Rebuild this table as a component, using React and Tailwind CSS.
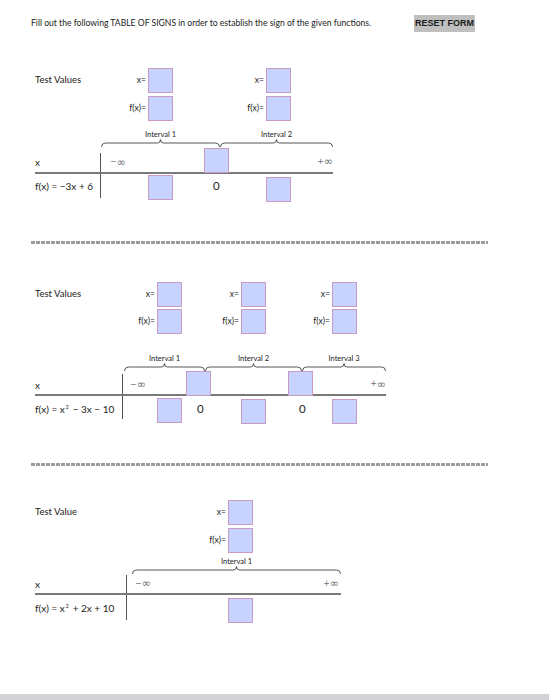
import React from 'react';

const Box = ({ className = '' }) => (
  <div className={`w-[25px] h-[25px] shrink-0 bg-[#c8d2fe] border border-[#c79bc4] ${className}`} />
);

const Label = ({ w, children }) => (
  <div className={`${w} shrink-0 text-right pr-[2px] text-[8.5px] whitespace-nowrap`}>{children}</div>
);

// curly braces over the intervals, one segment per interval
const Brace = ({ segments }) => {
  const total = segments.reduce((a, b) => a + b, 0);
  let x = 0;
  const paths = segments.map((w) => {
    const x0 = x + 0.5;
    const x1 = x + w - 0.5;
    const m = x + w / 2;
    x += w;
    return `M${x0} 8 Q${x0} 4 ${x0 + 4} 4 L${m - 3} 4 Q${m} 4 ${m} 0.5 Q${m} 4 ${m + 3} 4 L${x1 - 4} 4 Q${x1} 4 ${x1} 8`;
  });
  return (
    <svg width={total} height="8" className="block">
      {paths.map((d, i) => (
        <path key={i} d={d} fill="none" stroke="#444" strokeWidth="0.9" />
      ))}
    </svg>
  );
};

const Divider = ({ className = '' }) => (
  <div
    className={`ml-[31px] w-[457px] h-[3px] bg-[repeating-linear-gradient(90deg,#9c9c9c_0_4px,transparent_4px_5px)] ${className}`}
  />
);

const Inf = ({ sign }) => (
  <span className="flex items-center font-['DejaVu_Sans',sans-serif] text-[#6f6f6f] leading-none">
    <span className="text-[8px]">{sign}</span>
    <span className="text-[11px]">∞</span>
  </span>
);

export default function App() {
  return (
    <div className="w-[549px] h-[700px] bg-white flex flex-col font-['Lato',sans-serif] text-[#222] overflow-hidden">
      {/* Header */}
      <div className="mt-[15px] h-[17px] flex items-center">
        <p className="ml-[31px] w-[383px] text-[8.6px] whitespace-nowrap">
          Fill out the following TABLE OF SIGNS in order to establish the sign of the given functions.
        </p>
        <div className="w-[61px] h-[17px] bg-[#bfbfbf] flex items-center justify-center font-['Liberation_Sans',sans-serif] font-bold text-[9px] text-[#1a1a1a]">
          RESET FORM
        </div>
      </div>

      {/* Section 1 */}
      <div className="mt-[36px] ml-[35px] flex items-center h-[25px]">
        <div className="w-[83px] shrink-0 text-[9.5px]">Test Values</div>
        <Label w="w-[30px]">x=</Label>
        <Box />
        <div className="w-[63px] shrink-0" />
        <Label w="w-[30px]">x=</Label>
        <Box />
      </div>
      <div className="mt-[3px] ml-[35px] flex items-center h-[25px]">
        <div className="w-[83px] shrink-0" />
        <Label w="w-[30px]">f(x)=</Label>
        <Box />
        <div className="w-[63px] shrink-0" />
        <Label w="w-[30px]">f(x)=</Label>
        <Box />
      </div>
      <div className="mt-[9px] ml-[101px] h-[9px] flex text-[7.5px] leading-[9px]">
        <div className="w-[119px] text-center">Interval 1</div>
        <div className="w-[113px] text-center">Interval 2</div>
      </div>
      <div className="ml-[101px] h-[8px]">
        <Brace segments={[119, 113]} />
      </div>
      <div className="mt-[1px] ml-[35px] w-[298px]">
        <div className="flex h-[26px] border-b-2 border-[#7a7a7a]">
          <div className="w-[66px] shrink-0 mt-[5px] border-r-[1.5px] border-[#555] flex items-center text-[10px]">x</div>
          <div className="w-[103px] shrink-0 pl-[9px] flex items-center pt-[4px]"><Inf sign="−" /></div>
          <Box />
          <div className="flex-1 flex items-center justify-end pt-[3px]"><Inf sign="+" /></div>
        </div>
        <div className="flex h-[28px]">
          <div className="w-[66px] shrink-0 h-[24px] border-r-[1.5px] border-[#555] flex items-center text-[10px] whitespace-nowrap">
            f(x) = −3x + 6
          </div>
          <div className="w-[47px] shrink-0" />
          <Box className="mt-[1px]" />
          <div className="w-[93px] shrink-0 pl-[40px] h-[24px] flex items-center text-[11.5px]">0</div>
          <Box className="mt-[3px]" />
        </div>
      </div>

      <Divider className="mt-[39px]" />

      {/* Section 2 */}
      <div className="mt-[38px] ml-[35px] flex items-center h-[25px]">
        <div className="w-[92px] shrink-0 text-[9.5px]">Test Values</div>
        <Label w="w-[30px]">x=</Label>
        <Box />
        <div className="w-[29px] shrink-0" />
        <Label w="w-[30px]">x=</Label>
        <Box />
        <div className="w-[36px] shrink-0" />
        <Label w="w-[30px]">x=</Label>
        <Box />
      </div>
      <div className="mt-[2px] ml-[35px] flex items-center h-[25px]">
        <div className="w-[92px] shrink-0" />
        <Label w="w-[30px]">f(x)=</Label>
        <Box />
        <div className="w-[29px] shrink-0" />
        <Label w="w-[30px]">f(x)=</Label>
        <Box />
        <div className="w-[36px] shrink-0" />
        <Label w="w-[30px]">f(x)=</Label>
        <Box />
      </div>
      <div className="mt-[21px] ml-[124px] h-[8px] flex text-[7.5px] leading-[8px]">
        <div className="w-[81px] text-center">Interval 1</div>
        <div className="w-[97px] text-center">Interval 2</div>
        <div className="w-[84px] text-center">Interval 3</div>
      </div>
      <div className="ml-[124px] h-[8px]">
        <Brace segments={[81, 97, 84]} />
      </div>
      <div className="ml-[35px] w-[351px]">
        <div className="flex h-[25px] border-b-2 border-[#7a7a7a]">
          <div className="w-[88px] shrink-0 mt-[3px] border-r-[1.5px] border-[#555] flex items-center pt-[3px] text-[10px]">x</div>
          <div className="w-[63px] shrink-0 pl-[7px] flex items-center pt-[4px]"><Inf sign="−" /></div>
          <Box />
          <div className="w-[77px] shrink-0" />
          <Box />
          <div className="flex-1 flex items-center justify-end pt-[3px]"><Inf sign="+" /></div>
        </div>
        <div className="flex h-[28px]">
          <div className="w-[88px] shrink-0 h-[23px] border-r-[1.5px] border-[#555] flex items-center pt-[3px] text-[10px] whitespace-nowrap">
            f(x) = x<sup className="text-[5px] ml-[1px] mr-[4px]">2</sup>− 3x − 10
          </div>
          <div className="w-[34px] shrink-0" />
          <Box className="mt-[2px]" />
          <div className="w-[59px] shrink-0 pl-[15px] h-[26px] flex items-center text-[11.5px]">0</div>
          <Box className="mt-[3px]" />
          <div className="w-[66px] shrink-0 pl-[33px] h-[26px] flex items-center text-[11.5px]">0</div>
          <Box className="mt-[3px]" />
        </div>
      </div>

      <Divider className="mt-[39px]" />

      {/* Section 3 */}
      <div className="mt-[34px] ml-[35px] flex items-center h-[25px]">
        <div className="w-[163px] shrink-0 text-[9.5px]">Test Value</div>
        <Label w="w-[30px]">x=</Label>
        <Box />
      </div>
      <div className="mt-[3px] ml-[35px] flex items-center h-[25px]">
        <div className="w-[163px] shrink-0" />
        <Label w="w-[30px]">f(x)=</Label>
        <Box />
      </div>
      <div className="mt-[5px] ml-[132px] h-[8px] flex text-[7.5px] leading-[8px]">
        <div className="w-[209px] text-center">Interval 1</div>
      </div>
      <div className="ml-[132px] h-[8px]">
        <Brace segments={[209]} />
      </div>
      <div className="ml-[35px] w-[306px]">
        <div className="flex h-[21px] border-b-2 border-[#7a7a7a]">
          <div className="w-[92px] shrink-0 mt-[1px] border-r-[1.5px] border-[#555] flex items-center text-[10px]">x</div>
          <div className="flex-1 pl-[8px] pr-[2px] flex items-center justify-between">
            <Inf sign="−" />
            <Inf sign="+" />
          </div>
        </div>
        <div className="flex h-[28px]">
          <div className="w-[92px] shrink-0 h-[25px] border-r-[1.5px] border-[#555] flex items-center pt-[2px] text-[10px] whitespace-nowrap">
            f(x) = x<sup className="text-[5px] ml-[1px] mr-[4px]">2</sup>+ 2x + 10
          </div>
          <div className="w-[101px] shrink-0" />
          <Box className="mt-[3px]" />
        </div>
      </div>

      <div className="mt-auto h-[6px] bg-[#d2d2d6]" />
    </div>
  );
}
